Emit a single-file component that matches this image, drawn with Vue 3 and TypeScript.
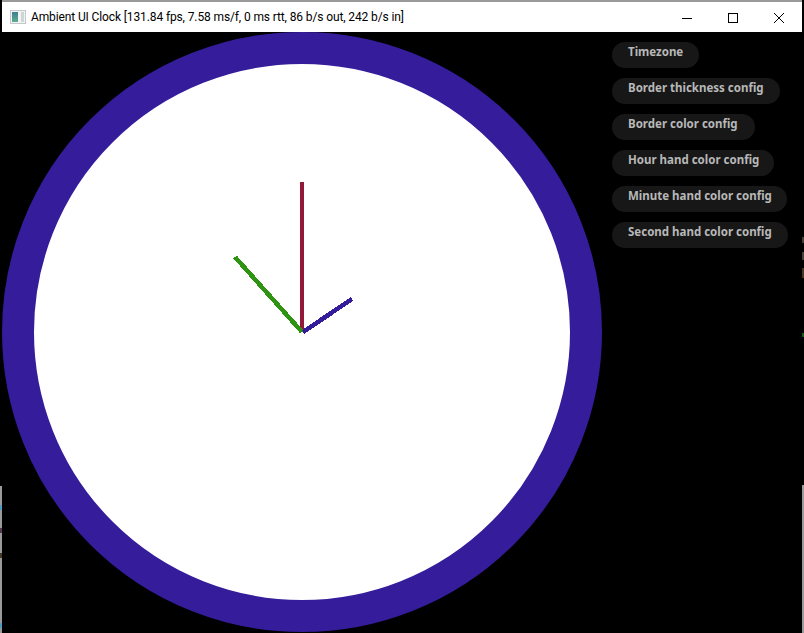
<script setup lang="ts">
const items: { label: string; width: number }[] = [
  { label: 'Timezone', width: 87 },
  { label: 'Border thickness config', width: 168 },
  { label: 'Border color config', width: 143 },
  { label: 'Hour hand color config', width: 162 },
  { label: 'Minute hand color config', width: 175 },
  { label: 'Second hand color config', width: 176 },
]
</script>

<template>
  <div class="window">
    <header class="titlebar">
      <svg class="app-icon" width="16" height="14" viewBox="0 0 16 14">
        <defs>
          <linearGradient id="tile" x1="0" y1="0" x2="0" y2="1">
            <stop offset="0" stop-color="#3d7f96" />
            <stop offset="1" stop-color="#5fae8c" />
          </linearGradient>
        </defs>
        <rect x="0.5" y="0.5" width="15" height="13" fill="#f2f4f4" stroke="#c4c8c8" />
        <rect x="2" y="2" width="6" height="10" fill="url(#tile)" />
        <rect x="11" y="2" width="3" height="10" fill="#cdd6d8" />
      </svg>
      <span class="title">Ambient UI Clock [131.84 fps, 7.58 ms/f, 0 ms rtt, 86 b/s out, 242 b/s in]</span>
      <div class="controls">
        <svg class="ctl" width="46" height="30" viewBox="0 0 46 30">
          <path d="M18 16.5h10" stroke="#000" fill="none" />
        </svg>
        <svg class="ctl" width="46" height="30" viewBox="0 0 46 30">
          <rect x="18.5" y="11.5" width="9" height="9" stroke="#000" fill="none" />
        </svg>
        <svg class="ctl" width="46" height="30" viewBox="0 0 46 30">
          <path d="M18 11l10 10M28 11L18 21" stroke="#000" fill="none" />
        </svg>
      </div>
    </header>
    <main class="content">
      <svg class="clock" width="600" height="600" viewBox="0 0 600 600">
        <circle cx="300" cy="300" r="284" fill="#fff" stroke="#351c9b" stroke-width="32" />
        <line x1="300" y1="300" x2="300" y2="150" stroke="#921a38" stroke-width="4" shape-rendering="crispEdges" />
        <line x1="300" y1="300" x2="233" y2="225" stroke="#2e9412" stroke-width="4.5" shape-rendering="crispEdges" />
        <line x1="301" y1="300" x2="350" y2="267" stroke="#351c9b" stroke-width="4.5" shape-rendering="crispEdges" />
      </svg>
      <nav class="menu">
        <button v-for="item in items" :key="item.label" class="pill" :style="{ width: item.width + 'px' }">
          {{ item.label }}
        </button>
      </nav>
    </main>
  </div>
</template>

<style>
html, body { margin: 0; background: #000; }
</style>

<style scoped>
.window {
  width: 804px;
  height: 633px;
  box-sizing: border-box;
  padding: 2px 2px 0;
  overflow: hidden;
  display: flex;
  flex-direction: column;
  background-color: #000;
  background-repeat: no-repeat;
  background-size: 2px 100%, 2px 100%, 100% 2px;
  background-position: left top, right top, left top;
  background-image:
    linear-gradient(#000 0 486px, #9a9a9a 486px 505px, #4f9cc0 505px 510px, #9a9a9a 510px 528px, #5a3a50 528px 533px, #9a9a9a 533px 553px, #4a3a2a 553px 558px, #9a9a9a 558px 623px, #4f9cc0 623px 628px, #9a9a9a 628px),
    linear-gradient(#000 0 237px, #4a3f34 237px 243px, #000 243px 252px, #4a3f34 252px 260px, #000 260px 268px, #4a3620 268px 278px, #000 278px 333px, #146014 333px 337px, #000 337px 485px, #9a9a9a 485px),
    linear-gradient(#9a9a9a, #9a9a9a);
}
.titlebar {
  height: 30px;
  flex: none;
  display: flex;
  align-items: center;
  background: #fff;
  padding-left: 8px;
}
.app-icon { flex: none; margin-right: 5px; }
.title {
  font: 12px Roboto, "Noto Sans", sans-serif;
  letter-spacing: -0.12px;
  color: #000;
  white-space: nowrap;
}
.controls { margin-left: auto; display: flex; }
.ctl { display: block; }
.content {
  flex: 1;
  display: flex;
  gap: 10px;
}
.clock { flex: none; display: block; }
.menu {
  display: flex;
  flex-direction: column;
  align-items: flex-start;
  gap: 10px;
  padding-top: 10px;
}
.pill {
  height: 26px;
  box-sizing: border-box;
  border: 0;
  border-radius: 13px;
  padding: 0 0 8px 16px;
  background: #171717;
  color: #b8b8b8;
  font: 700 11.5px "Noto Sans", sans-serif;
  text-align: left;
  white-space: nowrap;
}
</style>
